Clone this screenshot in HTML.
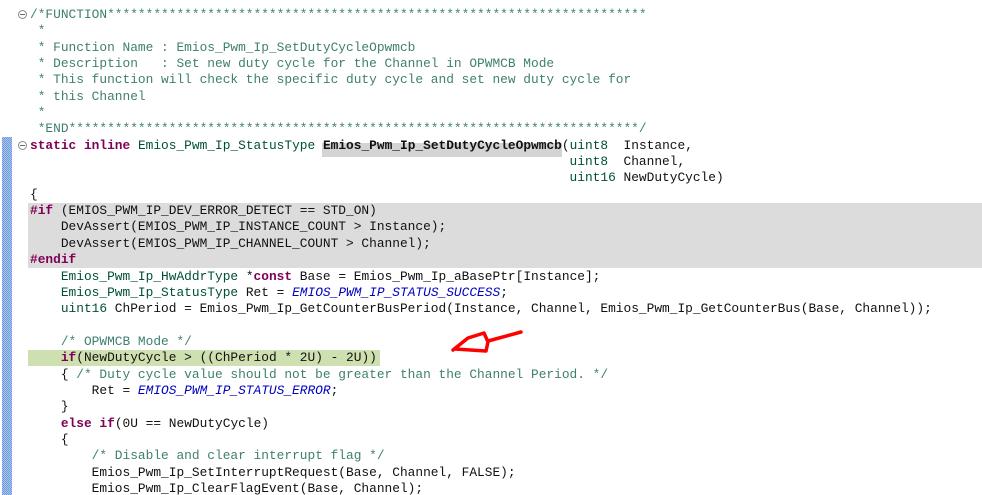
<!DOCTYPE html>
<html><head><style>
html,body{margin:0;padding:0;background:#fff;width:982px;height:495px;overflow:hidden;position:relative}
.bar{position:absolute;left:2px;top:137px;width:10px;height:358px;background:repeating-conic-gradient(#6f9ad8 0 25%,#a9c4ee 0 50%) 0 0/2px 2px}
.hl{position:absolute;left:28px;background:#dcdcdc}
pre{position:absolute;left:30px;top:7px;margin:0;font-family:"Liberation Mono",monospace;font-size:12.85px;line-height:16.35px;color:#111}
.c{color:#3f7f6f}.k{color:#7f0055;font-weight:bold}.t{color:#005032}.e{color:#0000c0;font-style:italic}
.fold{position:absolute;left:18px;width:7px;height:7px;border:1px solid #888;border-radius:50%;font-size:0}
.fold:after{content:"";position:absolute;left:1px;top:3px;width:5px;height:1px;background:#666}
</style></head><body>
<div class="bar"></div>
<div class="fold" style="top:10px"></div>
<div class="fold" style="top:141px"></div>
<div class="hl" style="top:203px;width:954px;height:65px"></div>
<div class="hl" style="top:350px;width:352px;height:16px;background:#cfe0b0"></div>
<div class="hl" style="top:143px;left:322px;width:240px;height:14px;background:#d4d4d4"></div>
<pre><span class="c">/*FUNCTION**********************************************************************
 *
 * Function Name : Emios_Pwm_Ip_SetDutyCycleOpwmcb
 * Description   : Set new duty cycle for the Channel in OPWMCB Mode
 * This function will check the specific duty cycle and set new duty cycle for
 * this Channel
 *
 *END**************************************************************************/</span>
<span class="k">static</span> <span class="k">inline</span> <span class="t">Emios_Pwm_Ip_StatusType</span> <b>Emios_Pwm_Ip_SetDutyCycleOpwmcb</b>(<span class="t">uint8</span>  Instance,
                                                                      <span class="t">uint8</span>  Channel,
                                                                      <span class="t">uint16</span> NewDutyCycle)
{
<span class="k">#if</span> (EMIOS_PWM_IP_DEV_ERROR_DETECT == STD_ON)
    DevAssert(EMIOS_PWM_IP_INSTANCE_COUNT &gt; Instance);
    DevAssert(EMIOS_PWM_IP_CHANNEL_COUNT &gt; Channel);
<span class="k">#endif</span>
    <span class="t">Emios_Pwm_Ip_HwAddrType</span> *<span class="k">const</span> Base = Emios_Pwm_Ip_aBasePtr[Instance];
    <span class="t">Emios_Pwm_Ip_StatusType</span> Ret = <span class="e">EMIOS_PWM_IP_STATUS_SUCCESS</span>;
    <span class="t">uint16</span> ChPeriod = Emios_Pwm_Ip_GetCounterBusPeriod(Instance, Channel, Emios_Pwm_Ip_GetCounterBus(Base, Channel));

    <span class="c">/* OPWMCB Mode */</span>
    <span class="k">if</span>(NewDutyCycle &gt; ((ChPeriod * 2U) - 2U))
    { <span class="c">/* Duty cycle value should not be greater than the Channel Period. */</span>
        Ret = <span class="e">EMIOS_PWM_IP_STATUS_ERROR</span>;
    }
    <span class="k">else</span> <span class="k">if</span>(0U == NewDutyCycle)
    {
        <span class="c">/* Disable and clear interrupt flag */</span>
        Emios_Pwm_Ip_SetInterruptRequest(Base, Channel, FALSE);
        Emios_Pwm_Ip_ClearFlagEvent(Base, Channel);</pre>
<svg style="position:absolute;left:0;top:0" width="982" height="495"><path d="M453 350 L468 338 L484 333 L488 342 L486 351 L455 349 M488 341 L521 332" fill="none" stroke="#f00" stroke-width="3.5" stroke-linecap="round" stroke-linejoin="round"/></svg>
</body></html>
